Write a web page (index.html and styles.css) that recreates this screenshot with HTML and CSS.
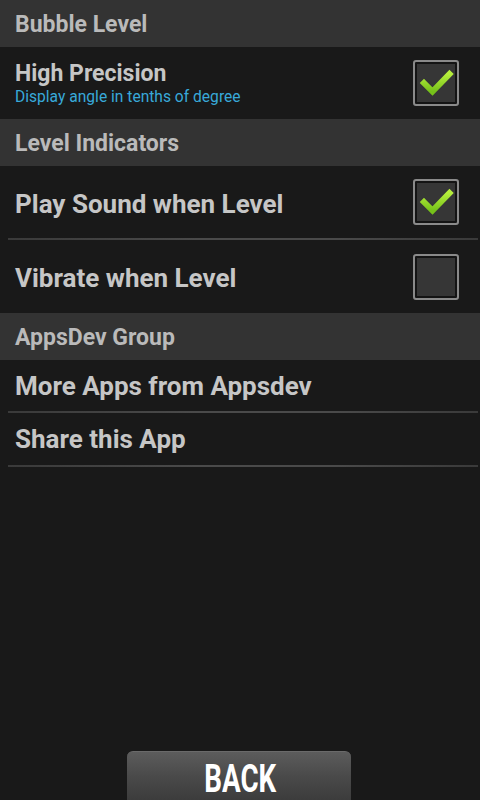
FILE: index.html
```html
<!DOCTYPE html>
<html>
<head>
<meta charset="utf-8">
<link rel="stylesheet" href="styles.css">
</head>
<body>
<div class="screen">
  <div class="header">Bubble Level</div>
  <div class="row row-two">
    <div class="texts">
      <div class="title title-small">High Precision</div>
      <div class="summary">Display angle in tenths of degree</div>
    </div>
    <div class="check on">
      <svg viewBox="0 0 46 46" width="46" height="46"><defs><linearGradient id="g1" x1="0" y1="0" x2="0" y2="1"><stop offset="0" stop-color="#b6ee3c"/><stop offset="1" stop-color="#76c11a"/></linearGradient></defs><path d="M11 23 L19.5 31.5 L36.5 14" fill="none" stroke="url(#g1)" stroke-width="6" stroke-linejoin="miter" stroke-linecap="square"/></svg>
    </div>
  </div>
  <div class="header">Level Indicators</div>
  <div class="row row-one">
    <div class="title title-shift">Play Sound when Level</div>
    <div class="check on">
      <svg viewBox="0 0 46 46" width="46" height="46"><defs><linearGradient id="g2" x1="0" y1="0" x2="0" y2="1"><stop offset="0" stop-color="#b6ee3c"/><stop offset="1" stop-color="#76c11a"/></linearGradient></defs><path d="M11 23 L19.5 31.5 L36.5 14" fill="none" stroke="url(#g2)" stroke-width="6" stroke-linejoin="miter" stroke-linecap="square"/></svg>
    </div>
  </div>
  <div class="divider"></div>
  <div class="row row-one row-last">
    <div class="title title-shift">Vibrate when Level</div>
    <div class="check"></div>
  </div>
  <div class="header">AppsDev Group</div>
  <div class="row row-link">
    <div class="title">More Apps from Appsdev</div>
  </div>
  <div class="divider"></div>
  <div class="row row-link row-link2">
    <div class="title">Share this App</div>
  </div>
  <div class="divider"></div>
  <div class="spacer"></div>
  <div class="footer">
    <div class="back"><span class="back-label">BACK</span></div>
  </div>
</div>
</body>
</html>
```
FILE: styles.css
```css
html, body {
  margin: 0;
  padding: 0;
  background: #191919;
}
.screen {
  width: 480px;
  height: 800px;
  display: flex;
  flex-direction: column;
  background: #191919;
  font-family: Roboto, "Noto Sans", sans-serif;
  overflow: hidden;
}
.header {
  height: 47px;
  background: #333333;
  color: #bababa;
  font-weight: bold;
  font-size: 23px;
  line-height: 45px;
  padding-top: 2px;
  padding-left: 15px;
  box-sizing: border-box;
  flex-shrink: 0;
}
.row {
  display: flex;
  align-items: center;
  justify-content: space-between;
  padding-left: 15px;
  padding-right: 21px;
  box-sizing: border-box;
  flex-shrink: 0;
}
.row-two { height: 72px; }
.row-one { height: 72px; }
.row-last { height: 73px; }
.row-link { height: 51px; }
.row-link2 { height: 52px; }
.texts {
  display: flex;
  flex-direction: column;
}
.title {
  color: #c6c6c6;
  font-weight: bold;
  font-size: 26px;
  line-height: 30px;
}
.title-shift {
  margin-top: 3px;
}
.title-small {
  font-size: 23px;
  line-height: 26px;
}
.summary {
  color: #38a9d9;
  font-size: 15.6px;
  line-height: 18px;
  margin-top: 1px;
}
.check {
  width: 46px;
  height: 46px;
  box-sizing: border-box;
  border: 2px solid #8a8a8a;
  border-radius: 3px;
  background: #363636;
  box-shadow: inset 0 0 0 2px #141414;
  position: relative;
}
.check svg {
  position: absolute;
  left: -2px;
  top: -2px;
}
.divider {
  height: 2px;
  margin-left: 8px;
  margin-right: 2px;
  flex-shrink: 0;
  background: linear-gradient(to right, #3a3a3a, #4a4a4a 40%, #4a4a4a 70%, #3a3a3a);
}
.spacer { flex: 1; }
.footer {
  display: flex;
  justify-content: center;
  padding-right: 2px;
}
.back {
  width: 224px;
  height: 49px;
  box-sizing: border-box;
  border-radius: 6px 6px 0 0;
  background: linear-gradient(to bottom, #5c5c5c, #4a4a4a 50%, #3c3c3c);
  border-top: 1px solid #6a6a6a;
  display: flex;
  justify-content: center;
  align-items: center;
}
.back-label {
  display: inline-block;
  color: #ffffff;
  font-family: Roboto, sans-serif;
  font-weight: bold;
  font-size: 38px;
  line-height: 40px;
  transform: scaleX(0.73);
  margin-top: 6px;
  margin-left: 3px;
}
```
